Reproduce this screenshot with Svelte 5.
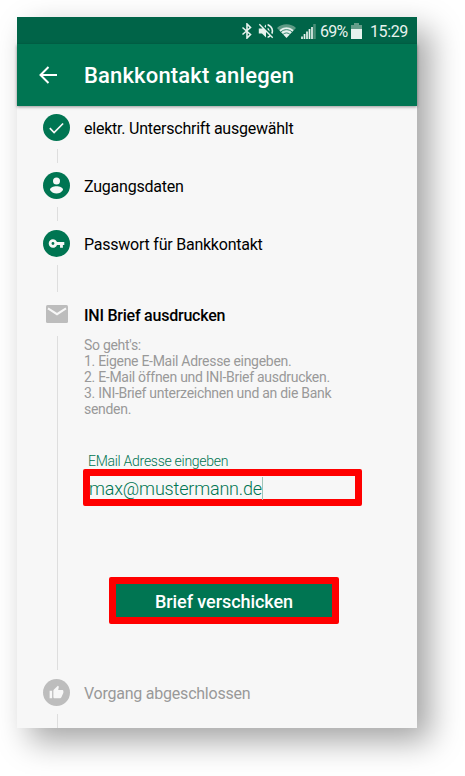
<script lang="ts">
	let email = 'max@mustermann.de';

	const instructions = [
		"So geht's:",
		'1. Eigene E-Mail Adresse eingeben.',
		'2. E-Mail öffnen und INI-Brief ausdrucken.',
		'3. INI-Brief unterzeichnen und an die Bank',
		'senden.'
	];
</script>

<main class="screen">
	<div class="status-bar">
		<svg class="bluetooth" width="12" height="16" viewBox="0 0 12 16">
			<path d="M1.5 4.5l8 7L6 15V1l3.5 3.5-8 7" fill="none" stroke="currentColor" stroke-width="1.6" />
		</svg>
		<svg class="muted" width="16" height="16" viewBox="2 2 20 20">
			<path
				d="M16.5 12c0-1.77-1.02-3.29-2.5-4.03v2.21l2.45 2.45c.03-.2.05-.41.05-.63zm2.5 0c0 .94-.2 1.82-.54 2.64l1.51 1.51C20.63 14.91 21 13.5 21 12c0-4.28-2.99-7.86-7-8.77v2.06c2.89.86 5 3.54 5 6.71zM4.27 3L3 4.27 7.73 9H3v6h4l5 5v-6.73l4.25 4.25c-.67.52-1.42.93-2.25 1.18v2.06c1.38-.31 2.63-.95 3.69-1.81L19.73 21 21 19.73l-9-9L4.27 3zM12 4L9.91 6.09 12 8.18V4z"
				fill="currentColor"
			/>
		</svg>
		<svg class="wifi" width="19" height="14" viewBox="0 0 19 14">
			<path d="M0 4C5-1 14-1 19 4l-2.2 2.3C12.7 2.4 6.3 2.4 2.2 6.3z" fill="#5f9b86" />
			<path d="M2.3 6.2C6.3 2.3 12.700 2.3 16.7 6.2L9.5 14z" fill="currentColor" />
			<path
				d="M4 7.8c3.2-2.8 7.8-2.8 11 0M6.200 10.2c2-1.7 4.6-1.7 6.6 0"
				fill="none"
				stroke="#006448"
				stroke-width="0.8"
			/>
		</svg>
		<svg class="signal" width="15" height="15" viewBox="0 0 15 15">
			<path d="M1 12.5v2.500M3.500 10v5M6 7.500v7.500M8.500 5v10" stroke="currentColor" stroke-width="1.700" />
			<path d="M11 3v12" stroke="currentColor" stroke-width="1.700" />
			<path d="M13.500 0v15" stroke="#4c8f79" stroke-width="2.500" />
		</svg>
		<span class="percent">69%</span>
		<svg class="battery" width="11" height="16" viewBox="0 0 11 16">
			<path d="M3 0h5v2h3v4H0V2h3z" fill="#659d89" />
			<path d="M0 6h11v10H0z" fill="currentColor" />
		</svg>
		<span class="clock">15:29</span>
	</div>

	<header class="app-bar">
		<button class="back" aria-label="Zurück">
			<svg width="18" height="18" viewBox="0 0 18 18">
				<path d="M9.5 1L1.5 9l8 8M1.5 9H18" fill="none" stroke="currentColor" stroke-width="2" />
			</svg>
		</button>
		<h1>Bankkontakt anlegen</h1>
	</header>

	<ol class="steps">
		<li class="step">
			<div class="rail">
				<span class="marker">
					<svg width="27" height="27" viewBox="0 0 27 27">
						<path d="M6.8 14.2l4.300 4.300 9-9" fill="none" stroke="currentColor" stroke-width="1.7" />
					</svg>
				</span>
				<span class="line"></span>
			</div>
			<h2 class="title">elektr. Unterschrift ausgewählt</h2>
		</li>
		<li class="step">
			<div class="rail">
				<span class="marker">
					<svg width="27" height="27" viewBox="0 0 27 27">
						<circle cx="13.5" cy="9" r="3.5" fill="currentColor" />
						<path d="M7 18c0-5 13-5 13 0-3 4.7-10 4.7-13 0z" fill="currentColor" />
					</svg>
				</span>
				<span class="line"></span>
			</div>
			<h2 class="title">Zugangsdaten</h2>
		</li>
		<li class="step key">
			<div class="rail">
				<span class="marker">
					<svg width="17" height="17" viewBox="0 0 24 24">
						<path
							d="M12.65 10C11.83 7.67 9.61 6 7 6c-3.31 0-6 2.69-6 6s2.69 6 6 6c2.61 0 4.83-1.67 5.65-4H17v4h4v-4h2v-4H12.65zM7 14c-1.1 0-2-.9-2-2s.9-2 2-2 2 .9 2 2-.9 2-2 2z"
							fill="currentColor"
						/>
					</svg>
				</span>
				<span class="line"></span>
			</div>
			<h2 class="title">Passwort für Bankkontakt</h2>
		</li>
		<li class="step letter">
			<div class="rail">
				<span class="marker plain">
					<svg width="22" height="18" viewBox="0 0 22 18">
						<rect width="22" height="18" rx="1.5" fill="currentColor" />
						<path d="M2 3.3l9 5.9 9-5.9" fill="none" stroke="#f7f7f7" stroke-width="2" />
					</svg>
				</span>
				<span class="line"></span>
			</div>
			<div class="body">
				<h2 class="title active">INI Brief ausdrucken</h2>
				<p class="hint">
					{#each instructions as line}
						<span>{line}</span>
					{/each}
				</p>
				<label for="email">EMail Adresse eingeben</label>
				<div class="field" id="email">
					<span>{email}</span><i class="caret"></i>
				</div>
				<button class="submit">Brief verschicken</button>
			</div>
		</li>
		<li class="step last">
			<div class="rail">
				<span class="marker disabled">
					<svg width="15" height="15" viewBox="0 1 24 22">
						<path
							d="M1 21h4V9H1v12zm22-11c0-1.1-.9-2-2-2h-6.31l.95-4.57.03-.32c0-.41-.17-.79-.44-1.06L14.17 1 7.59 7.59C7.22 7.95 7 8.45 7 9v10c0 1.1.9 2 2 2h9c.83 0 1.54-.5 1.84-1.22l3.02-7.05c.09-.23.14-.47.14-.73v-2z"
							fill="currentColor"
						/>
					</svg>
				</span>
				<span class="line"></span>
			</div>
			<h2 class="title done">Vorgang abgeschlossen</h2>
		</li>
	</ol>
</main>

<style>
	:global(body) {
		display: flow-root;
		min-height: 100vh;
		background: #fff;
	}

	.screen {
		--green: #007552;
		display: flex;
		flex-direction: column;
		width: 400px;
		height: 711px;
		margin: 17px;
		background: #f7f7f7;
		box-shadow: 13px 13px 30px rgba(0, 0, 0, 0.36);
		font-family: Roboto, 'Liberation Sans', sans-serif;
		color: #000;
	}

	h1,
	h2,
	p {
		margin: 0;
	}

	button {
		padding: 0;
		border: none;
		font-family: inherit;
	}

	.status-bar {
		display: flex;
		align-items: center;
		box-sizing: border-box;
		height: 27px;
		padding: 1px 0 0 224px;
		background: #006448;
		color: #e7f2ee;
		font-size: 16px;
		flex-shrink: 0;
	}

	.status-bar svg {
		flex-shrink: 0;
	}

	.muted {
		margin-left: 5px;
	}

	.wifi {
		margin-left: 3px;
	}

	.signal {
		margin-left: 5px;
	}

	.percent {
		width: 28px;
		margin-left: 4px;
		letter-spacing: -0.7px;
	}

	.battery {
		margin-left: 3px;
	}

	.clock {
		margin-left: 8px;
		letter-spacing: -0.4px;
	}

	.app-bar {
		display: flex;
		align-items: center;
		height: 62px;
		padding-left: 22px;
		flex-shrink: 0;
		background: var(--green);
		color: #fff;
		box-shadow: 0 1px 3px rgba(0, 0, 0, 0.4);
	}

	.back {
		display: flex;
		width: 18px;
		background: none;
		color: inherit;
	}

	h1 {
		padding-top: 1px;
		margin-left: 27px;
		font-size: 22px;
		font-weight: 500;
		letter-spacing: 0.16px;
	}

	.steps {
		display: flex;
		flex-direction: column;
		flex: 1;
		margin: 0;
		padding: 8px 0 0 26px;
		list-style: none;
	}

	.step {
		display: flex;
		gap: 14px;
		height: 58px;
		flex-shrink: 0;
	}

	.key {
		height: 71px;
	}

	.letter {
		height: 378px;
	}

	.last {
		height: 49px;
	}

	.rail {
		display: flex;
		flex-direction: column;
		align-items: center;
		width: 27px;
	}

	.marker {
		display: flex;
		align-items: center;
		justify-content: center;
		width: 27px;
		height: 27px;
		flex-shrink: 0;
		border-radius: 50%;
		background: var(--green);
		color: #f7f7f7;
	}

	.plain {
		background: none;
		color: #bdbdbd;
	}

	.plain svg {
		margin: 0 0 1px 1px;
	}

	.disabled {
		background: #bdbdbd;
	}

	.line {
		flex: 1;
		width: 1px;
		margin: 8px 0 9px 1px;
		background: #dedede;
	}

	.last .line {
		margin-bottom: 0;
	}

	.title {
		padding-top: 1px;
		font-size: 16px;
		font-weight: 400;
		line-height: 27px;
		letter-spacing: -0.23px;
		white-space: nowrap;
	}

	.active {
		font-weight: 500;
	}

	.done {
		color: #999;
	}

	.body {
		display: flex;
		flex-direction: column;
		align-items: flex-start;
	}

	.hint {
		display: flex;
		flex-direction: column;
		margin-top: 8px;
		color: #999;
		font-size: 14px;
		line-height: 16px;
		letter-spacing: -0.29px;
		white-space: nowrap;
	}

	label {
		margin: 36px 0 0 4px;
		color: var(--green);
		font-size: 14px;
		font-weight: 300;
		line-height: 16px;
		letter-spacing: -0.28px;
	}

	.field {
		display: flex;
		align-items: center;
		box-sizing: border-box;
		width: 279px;
		height: 37px;
		padding-top: 2px;
		border: 7px solid #f00;
		border-radius: 2px;
		margin-left: -1px;
		color: var(--green);
		font-size: 18px;
		font-weight: 300;
		letter-spacing: -0.18px;
	}

	.field span {
		margin-left: -1px;
	}

	.caret {
		width: 1px;
		height: 23px;
		background: #9fc4b7;
	}

	.submit {
		width: 230px;
		height: 47px;
		padding-top: 2px;
		margin: 71px 0 0 25px;
		border: 7px solid #f00;
		border-radius: 2px;
		background: var(--green);
		color: #fff;
		font-size: 18px;
		font-weight: 500;
		letter-spacing: -0.06px;
	}
</style>
